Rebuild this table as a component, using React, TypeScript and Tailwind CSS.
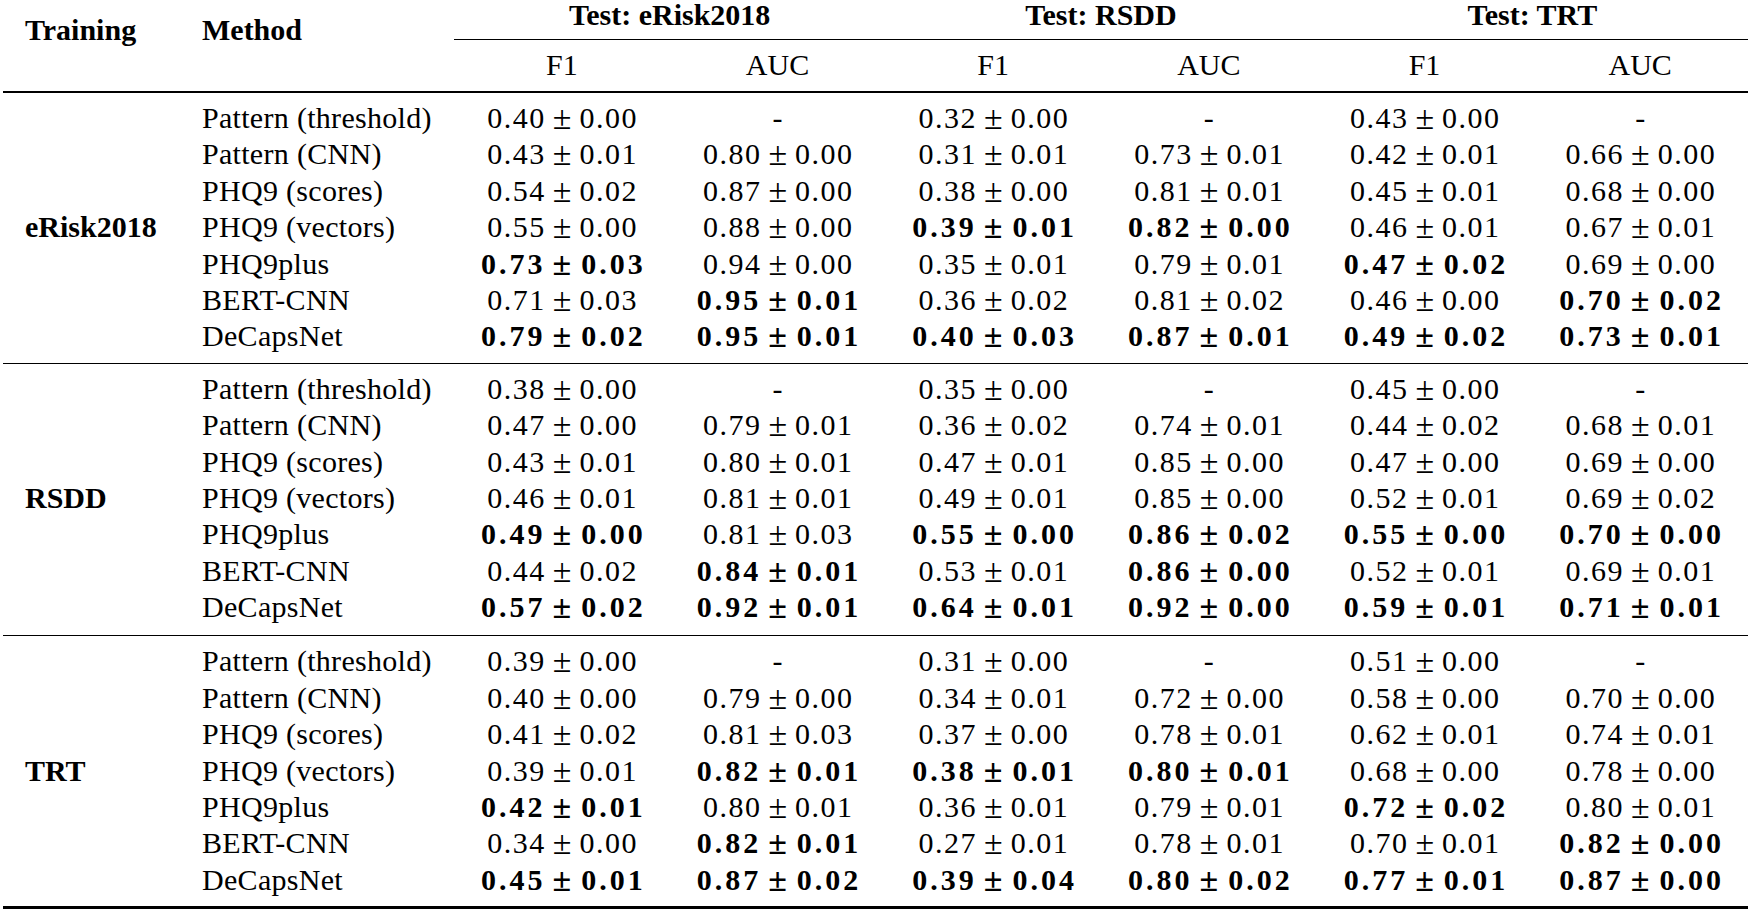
import React from "react";

const methods = [
  "Pattern (threshold)",
  "Pattern (CNN)",
  "PHQ9 (scores)",
  "PHQ9 (vectors)",
  "PHQ9plus",
  "BERT-CNN",
  "DeCapsNet",
];

const sections: { name: string; rows: string[][]; cls: string }[] = [
  {
    name: "eRisk2018",
    cls: "pt-[7px] pb-[8px]",
    rows: [
      ["0.40 0.00", "-", "0.32 0.00", "-", "0.43 0.00", "-"],
      ["0.43 0.01", "0.80 0.00", "0.31 0.01", "0.73 0.01", "0.42 0.01", "0.66 0.00"],
      ["0.54 0.02", "0.87 0.00", "0.38 0.00", "0.81 0.01", "0.45 0.01", "0.68 0.00"],
      ["0.55 0.00", "0.88 0.00", "*0.39 0.01", "*0.82 0.00", "0.46 0.01", "0.67 0.01"],
      ["*0.73 0.03", "0.94 0.00", "0.35 0.01", "0.79 0.01", "*0.47 0.02", "0.69 0.00"],
      ["0.71 0.03", "*0.95 0.01", "0.36 0.02", "0.81 0.02", "0.46 0.00", "*0.70 0.02"],
      ["*0.79 0.02", "*0.95 0.01", "*0.40 0.03", "*0.87 0.01", "*0.49 0.02", "*0.73 0.01"],
    ],
  },
  {
    name: "RSDD",
    cls: "pt-[7px] pb-[10px]",
    rows: [
      ["0.38 0.00", "-", "0.35 0.00", "-", "0.45 0.00", "-"],
      ["0.47 0.00", "0.79 0.01", "0.36 0.02", "0.74 0.01", "0.44 0.02", "0.68 0.01"],
      ["0.43 0.01", "0.80 0.01", "0.47 0.01", "0.85 0.00", "0.47 0.00", "0.69 0.00"],
      ["0.46 0.01", "0.81 0.01", "0.49 0.01", "0.85 0.00", "0.52 0.01", "0.69 0.02"],
      ["*0.49 0.00", "0.81 0.03", "*0.55 0.00", "*0.86 0.02", "*0.55 0.00", "*0.70 0.00"],
      ["0.44 0.02", "*0.84 0.01", "0.53 0.01", "*0.86 0.00", "0.52 0.01", "0.69 0.01"],
      ["*0.57 0.02", "*0.92 0.01", "*0.64 0.01", "*0.92 0.00", "*0.59 0.01", "*0.71 0.01"],
    ],
  },
  {
    name: "TRT",
    cls: "pt-[7px] pb-[8px]",
    rows: [
      ["0.39 0.00", "-", "0.31 0.00", "-", "0.51 0.00", "-"],
      ["0.40 0.00", "0.79 0.00", "0.34 0.01", "0.72 0.00", "0.58 0.00", "0.70 0.00"],
      ["0.41 0.02", "0.81 0.03", "0.37 0.00", "0.78 0.01", "0.62 0.01", "0.74 0.01"],
      ["0.39 0.01", "*0.82 0.01", "*0.38 0.01", "*0.80 0.01", "0.68 0.00", "0.78 0.00"],
      ["*0.42 0.01", "0.80 0.01", "0.36 0.01", "0.79 0.01", "*0.72 0.02", "0.80 0.01"],
      ["0.34 0.00", "*0.82 0.01", "0.27 0.01", "0.78 0.01", "0.70 0.01", "*0.82 0.00"],
      ["*0.45 0.01", "*0.87 0.02", "*0.39 0.04", "*0.80 0.02", "*0.77 0.01", "*0.87 0.00"],
    ],
  },
];

function Cell({ v }: { v: string }) {
  if (v === "-") {
    return <div className="flex items-center justify-center">-</div>;
  }
  const bold = v.startsWith("*");
  const [a, b] = v.replace("*", "").split(" ");
  if (bold) {
    return (
      <div className="flex items-center justify-center font-bold">
        <span className="tracking-[3px]">{a}</span>
        <span className="ml-[7px] mr-[10px] text-[34px]">±</span>
        <span className="tracking-[3px] mr-[-3px]">{b}</span>
      </div>
    );
  }
  return (
    <div className="flex items-center justify-center">
      <span className="tracking-[1.5px]">{a}</span>
      <span className="ml-[7px] mr-[8px] text-[34px]">±</span>
      <span className="tracking-[1.5px] mr-[-1.5px]">{b}</span>
    </div>
  );
}

export default function App() {
  return (
    <div
      className="w-[1752px] h-[913px] bg-white text-black text-[30px] leading-[36.4px] pl-[3px] pr-[4px]"
      style={{ fontFamily: '"Liberation Serif", "Times New Roman", serif' }}
    >
      {/* header */}
      <div className="grid grid-cols-[199px_252px_1fr] h-[91px]">
        <div className="pl-[22px] pt-[12px] font-bold">Training</div>
        <div className="pt-[12px] font-bold">Method</div>
        <div className="flex flex-col">
          <div className="grid grid-cols-3 h-[40px] border-b border-black">
            {["Test: eRisk2018", "Test: RSDD", "Test: TRT"].map((t) => (
              <div key={t} className="flex justify-center font-bold leading-[30px]">
                {t}
              </div>
            ))}
          </div>
          <div className="grid grid-cols-6 pt-[10px]">
            {["F1", "AUC", "F1", "AUC", "F1", "AUC"].map((t, i) => (
              <div key={i} className="flex justify-center leading-[30px]">
                {t}
              </div>
            ))}
          </div>
        </div>
      </div>
      <div className="h-[2px] bg-black" />
      {sections.map((s, si) => (
        <div key={s.name}>
          <div className={`grid grid-cols-[199px_252px_1fr] ${s.cls}`}>
            <div className="pl-[22px] flex items-center font-bold">{s.name}</div>
            <div className="flex flex-col">
              {methods.map((m) => (
                <div key={m} className="h-[36.4px] tracking-[0.3px]">
                  {m}
                </div>
              ))}
            </div>
            <div className="flex flex-col">
              {s.rows.map((r, ri) => (
                <div key={ri} className="grid grid-cols-6 h-[36.4px]">
                  {r.map((v, ci) => (
                    <Cell key={ci} v={v} />
                  ))}
                </div>
              ))}
            </div>
          </div>
          <div className={si === 2 ? "h-[3px] bg-black" : "h-[1px] bg-black"} />
        </div>
      ))}
    </div>
  );
}
